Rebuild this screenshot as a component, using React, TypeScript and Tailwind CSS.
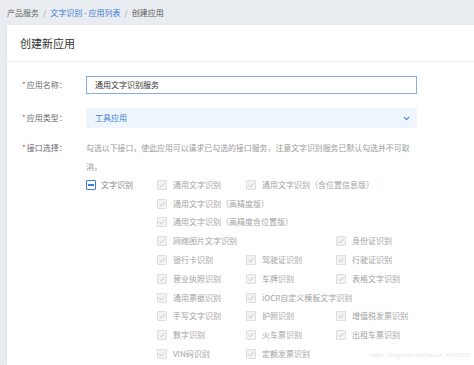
import { ChevronDown } from 'lucide-react';

const apis: { label: string; wide?: boolean }[] = [
  { label: '通用文字识别' },
  { label: '通用文字识别（含位置信息版）', wide: true },
  { label: '通用文字识别（高精度版）', wide: true },
  { label: '通用文字识别（高精度含位置版）', wide: true },
  { label: '网络图片文字识别', wide: true },
  { label: '身份证识别' },
  { label: '银行卡识别' },
  { label: '驾驶证识别' },
  { label: '行驶证识别' },
  { label: '营业执照识别' },
  { label: '车牌识别' },
  { label: '表格文字识别' },
  { label: '通用票据识别' },
  { label: 'iOCR自定义模板文字识别', wide: true },
  { label: '手写文字识别' },
  { label: '护照识别' },
  { label: '增值税发票识别' },
  { label: '数字识别' },
  { label: '火车票识别' },
  { label: '出租车票识别' },
  { label: 'VIN码识别' },
  { label: '定额发票识别' },
];

function Label({ text }: { text: string }) {
  return (
    <div className="w-[79px] shrink-0 pl-[15px] text-[8px] text-[#6a6a6a]">
      <span className="text-[#e0474c] mr-[1px]">*</span>
      {text}
    </div>
  );
}

function GrayCheck() {
  return (
    <span className="w-[10px] h-[10px] shrink-0 border border-[#dedede] bg-[#f3f3f3] rounded-[1px] flex items-center justify-center">
      <svg viewBox="0 0 10 10" className="w-[8px] h-[8px]">
        <path d="M2 5.2 L4.2 7.3 L8 3" fill="none" stroke="#c4c4c4" strokeWidth="1.2" />
      </svg>
    </span>
  );
}

export default function App() {
  return (
    <div className="w-[474px] h-[365px] bg-[#e9ecf0] flex flex-col overflow-hidden relative font-['Noto_Sans_CJK_SC',sans-serif]">
      {/* Breadcrumb */}
      <div className="h-[25px] shrink-0 flex items-center pl-[7px] text-[8px] text-[#666] gap-[4px]">
        <span>产品服务</span>
        <span className="text-[#999]">/</span>
        <span className="text-[#3b7ed5]">文字识别 - 应用列表</span>
        <span className="text-[#999]">/</span>
        <span className="text-[#555]">创建应用</span>
      </div>

      <div className="ml-[7px] flex-1 bg-white shadow-[-1px_0_2px_rgba(0,0,0,0.04)]">
        <div className="h-[37px] flex items-center pl-[13px] text-[11px] text-[#333] border-b border-[#eeeeee]">
          创建新应用
        </div>

        <div className="pt-[14px]">
          {/* name */}
          <div className="flex items-center h-[18px]">
            <Label text="应用名称：" />
            <div className="w-[331px] h-[18px] border border-[#86aee0] flex items-center pl-[8px] text-[8px] text-[#333]">
              通用文字识别服务
            </div>
          </div>

          {/* type */}
          <div className="flex items-center h-[20px] mt-[14px]">
            <Label text="应用类型：" />
            <div className="w-[331px] h-[20px] bg-[#eef5fd] flex items-center justify-between pl-[9px] pr-[6px] text-[8px] text-[#3b7ed5]">
              <span>工具应用</span>
              <ChevronDown className="w-[9px] h-[9px] text-[#3b7ed5]" strokeWidth={3} />
            </div>
          </div>

          {/* apis */}
          <div className="flex items-start mt-[9.5px]">
            <div className="leading-[19px] shrink-0">
              <Label text="接口选择：" />
            </div>
            <div className="w-[345px]">
              <p className="text-[7.9px] leading-[19px] text-[#9a9a9a] whitespace-nowrap">
                勾选以下接口，使此应用可以请求已勾选的接口服务，注意文字识别服务已默认勾选并不可取
                <br />
                消。
              </p>
              <div className="flex">
                <div className="w-[71px] shrink-0 h-[18.8px] flex items-center gap-[5px]">
                  <span className="w-[10px] h-[10px] border border-[#3b7ed5] bg-white rounded-[1px] flex items-center justify-center">
                    <span className="w-[6px] h-[1.5px] bg-[#3b7ed5]" />
                  </span>
                  <span className="text-[8px] text-[#888]">文字识别</span>
                </div>
                <div className="grid grid-cols-[89px_90px_90px] auto-rows-[18.8px]">
                  {apis.map((a) => (
                    <div
                      key={a.label}
                      className={`flex items-center gap-[6px] whitespace-nowrap ${a.wide ? 'col-span-2' : ''}`}
                    >
                      <GrayCheck />
                      <span className="text-[8px] text-[#a3a3a3]">{a.label}</span>
                    </div>
                  ))}
                </div>
              </div>
            </div>
          </div>
        </div>
      </div>

      {/* watermark */}
      <div className="absolute right-[4px] bottom-[6px] text-[5.5px] text-[#e6e6e6]">
        https://blog.csdn.net/weixin_43431593
      </div>
    </div>
  );
}
